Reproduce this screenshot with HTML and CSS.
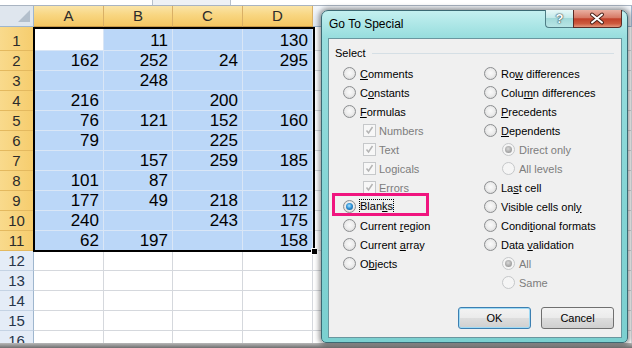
FILE: index.html
```html
<!DOCTYPE html>
<html lang="en">
<head>
  <meta charset="UTF-8">
  <title>Go To Special</title>
  <link rel="stylesheet" href="styles.css">
</head>
<body>
<div class="screen">
  <div class="formula-bar">
    <span class="fb-name"></span>
    <span class="fb-tools"></span>
    <span class="fb-input"></span>
  </div>

  <div class="sheet">
    <div class="corner">
      <svg width="14" height="14" viewBox="0 0 14 14"><polygon points="13,1 13,13 1,13" fill="#b3bfcc"/></svg>
    </div>
    <div class="ch on">A</div><div class="ch on">B</div><div class="ch on">C</div><div class="ch on">D</div><div class="ch">E</div>

    <div class="rh on">1</div><div class="c active"></div><div class="c sel">11</div><div class="c sel"></div><div class="c sel">130</div><div class="c"></div>
    <div class="rh on">2</div><div class="c sel">162</div><div class="c sel">252</div><div class="c sel">24</div><div class="c sel">295</div><div class="c"></div>
    <div class="rh on">3</div><div class="c sel"></div><div class="c sel">248</div><div class="c sel"></div><div class="c sel"></div><div class="c"></div>
    <div class="rh on">4</div><div class="c sel">216</div><div class="c sel"></div><div class="c sel">200</div><div class="c sel"></div><div class="c"></div>
    <div class="rh on">5</div><div class="c sel">76</div><div class="c sel">121</div><div class="c sel">152</div><div class="c sel">160</div><div class="c"></div>
    <div class="rh on">6</div><div class="c sel">79</div><div class="c sel"></div><div class="c sel">225</div><div class="c sel"></div><div class="c"></div>
    <div class="rh on">7</div><div class="c sel"></div><div class="c sel">157</div><div class="c sel">259</div><div class="c sel">185</div><div class="c"></div>
    <div class="rh on">8</div><div class="c sel">101</div><div class="c sel">87</div><div class="c sel"></div><div class="c sel"></div><div class="c"></div>
    <div class="rh on">9</div><div class="c sel">177</div><div class="c sel">49</div><div class="c sel">218</div><div class="c sel">112</div><div class="c"></div>
    <div class="rh on">10</div><div class="c sel">240</div><div class="c sel"></div><div class="c sel">243</div><div class="c sel">175</div><div class="c"></div>
    <div class="rh on">11</div><div class="c sel">62</div><div class="c sel">197</div><div class="c sel"></div><div class="c sel">158</div><div class="c"></div>
    <div class="rh">12</div><div class="c"></div><div class="c"></div><div class="c"></div><div class="c"></div><div class="c"></div>
    <div class="rh">13</div><div class="c"></div><div class="c"></div><div class="c"></div><div class="c"></div><div class="c"></div>
    <div class="rh">14</div><div class="c"></div><div class="c"></div><div class="c"></div><div class="c"></div><div class="c"></div>
    <div class="rh">15</div><div class="c"></div><div class="c"></div><div class="c"></div><div class="c"></div><div class="c"></div>
    <div class="rh">16</div><div class="c"></div><div class="c"></div><div class="c"></div><div class="c"></div><div class="c"></div>

    <div class="selection"><span class="fill-handle"></span></div>
  </div>

  <div class="frame-bottom"></div>

  <div class="dialog">
    <div class="titlebar">
      <span class="title">Go To Special</span>
      <div class="caption-buttons">
        <span class="help-btn">?</span>
        <span class="close-btn">
          <svg width="46" height="17" viewBox="0 0 46 17">
            <path d="M18 4.5 L28 12.5 M28 4.5 L18 12.5" stroke="#4a2118" stroke-width="4" stroke-linecap="round"/>
            <path d="M18 4.5 L28 12.5 M28 4.5 L18 12.5" stroke="#fff" stroke-width="2" stroke-linecap="round"/>
          </svg>
        </span>
      </div>
    </div>

    <div class="client">
      <div class="group-head">
        <span>Select</span>
        <span class="group-line"></span>
      </div>

      <div class="options">
        <div class="col">
          <div class="opt"><span class="radio"></span><span><u>C</u>omments</span></div>
          <div class="opt"><span class="radio"></span><span>C<u>o</u>nstants</span></div>
          <div class="opt"><span class="radio"></span><span><u>F</u>ormulas</span></div>
          <div class="opt sub disabled"><span class="check"><svg width="11" height="11" viewBox="0 0 11 11"><path d="M2.5 5.5 L4.5 8 L8.5 2" fill="none" stroke="#b4b4b4" stroke-width="1.5"/></svg></span><span>Numbers</span></div>
          <div class="opt sub disabled"><span class="check"><svg width="11" height="11" viewBox="0 0 11 11"><path d="M2.5 5.5 L4.5 8 L8.5 2" fill="none" stroke="#b4b4b4" stroke-width="1.5"/></svg></span><span>Text</span></div>
          <div class="opt sub disabled"><span class="check"><svg width="11" height="11" viewBox="0 0 11 11"><path d="M2.5 5.5 L4.5 8 L8.5 2" fill="none" stroke="#b4b4b4" stroke-width="1.5"/></svg></span><span>Logicals</span></div>
          <div class="opt sub disabled"><span class="check"><svg width="11" height="11" viewBox="0 0 11 11"><path d="M2.5 5.5 L4.5 8 L8.5 2" fill="none" stroke="#b4b4b4" stroke-width="1.5"/></svg></span><span>Errors</span></div>
          <div class="opt"><span class="radio checked"></span><span class="focus">Blan<u>k</u>s</span><span class="highlight"></span></div>
          <div class="opt"><span class="radio"></span><span>Current <u>r</u>egion</span></div>
          <div class="opt"><span class="radio"></span><span>Current <u>a</u>rray</span></div>
          <div class="opt"><span class="radio"></span><span>O<u>b</u>jects</span></div>
        </div>
        <div class="col">
          <div class="opt"><span class="radio"></span><span>Ro<u>w</u> differences</span></div>
          <div class="opt"><span class="radio"></span><span>Colu<u>m</u>n differences</span></div>
          <div class="opt"><span class="radio"></span><span><u>P</u>recedents</span></div>
          <div class="opt"><span class="radio"></span><span><u>D</u>ependents</span></div>
          <div class="opt sub-radio disabled"><span class="radio checked"></span><span>Direct only</span></div>
          <div class="opt sub-radio disabled"><span class="radio"></span><span>All levels</span></div>
          <div class="opt"><span class="radio"></span><span>La<u>s</u>t cell</span></div>
          <div class="opt"><span class="radio"></span><span>Visible cells onl<u>y</u></span></div>
          <div class="opt"><span class="radio"></span><span>Condi<u>t</u>ional formats</span></div>
          <div class="opt"><span class="radio"></span><span>Data <u>v</u>alidation</span></div>
          <div class="opt sub-radio disabled"><span class="radio checked"></span><span>All</span></div>
          <div class="opt sub-radio disabled"><span class="radio"></span><span>Same</span></div>
        </div>
      </div>

      <div class="actions">
        <button class="btn default">OK</button>
        <button class="btn">Cancel</button>
      </div>
    </div>
  </div>
</div>
</body>
</html>
```

FILE: styles.css
```css
body {
  margin: 0;
  overflow: hidden;
  font-family: "Liberation Sans", Arial, sans-serif;
}

.screen {
  position: relative;
  width: 632px;
  height: 348px;
  overflow: hidden;
  display: flex;
  flex-direction: column;
  background: #ffffff;
}

/* bottom edge of the formula bar */
.formula-bar {
  height: 5px;
  flex: none;
  display: flex;
  background: #eef1f5;
  border-bottom: 1px solid #a9b4c2;
}

.fb-name {
  width: 152px;
  border-right: 1px solid #b7c0cb;
  background: #ffffff;
}

.fb-tools {
  width: 77px;
  border-right: 1px solid #b7c0cb;
}

.fb-input {
  flex: 1;
  background: #ffffff;
}

/* worksheet */
.sheet {
  position: relative;
  flex: 1;
  overflow: hidden;
  display: grid;
  grid-template-columns: 34px 70px 69px 70px 70px 1fr;
  grid-template-rows: 21px 24px repeat(15, 20px);
}

.corner {
  box-sizing: border-box;
  background: #dfe6ee;
  border-right: 1px solid #9eb6ce;
  border-bottom: 1px solid #9eb6ce;
  display: flex;
  align-items: flex-end;
  justify-content: flex-end;
  padding: 0 2px 3px 0;
}

.corner svg {
  display: block;
}

.ch {
  box-sizing: border-box;
  background: linear-gradient(#f4f7fb, #dde6f1);
  border-right: 1px solid #9eb6ce;
  border-bottom: 1px solid #9eb6ce;
  color: #27354a;
  font-size: 15px;
  line-height: 20px;
  text-align: center;
}

.ch.on {
  background: linear-gradient(#fae4a8 0, #f8d681 45%, #f4c662 100%);
  border-right-color: #d9b066;
  border-bottom-color: #c99a48;
  color: #2b2b2b;
}

.rh {
  box-sizing: border-box;
  background: #e4ecf7;
  border-right: 1px solid #9eb6ce;
  border-bottom: 1px solid #c5d3e4;
  color: #27354a;
  font-size: 15px;
  line-height: 15px;
  display: flex;
  align-items: flex-end;
  justify-content: center;
  padding-bottom: 2px;
}

.rh.on {
  background: linear-gradient(90deg, #f9da8c, #f6cd6e);
  border-right-color: #c99a48;
  border-bottom-color: #e4b95f;
  color: #2b2b2b;
}

.c {
  box-sizing: border-box;
  border-right: 1px solid #d5d8dd;
  border-bottom: 1px solid #d5d8dd;
  font-size: 17px;
  line-height: 17px;
  display: flex;
  align-items: flex-end;
  justify-content: flex-end;
  padding: 0 4px 1px 0;
}

.c.sel {
  background: #bbd7f8;
  border-color: #d9e6f6;
}

.c.active {
  background: #ffffff;
  border-color: #d9e6f6;
}

.selection {
  position: absolute;
  left: 33px;
  top: 21px;
  width: 282px;
  height: 225px;
  box-sizing: border-box;
  border: 2px solid #000000;
}

.fill-handle {
  position: absolute;
  right: -5px;
  bottom: -5px;
  width: 5px;
  height: 5px;
  background: #000000;
  border: 1px solid #ffffff;
}

.frame-bottom {
  height: 5px;
  flex: none;
  background: linear-gradient(#b9b9b9, #6f6f6f);
}

/* dialog window */
.dialog {
  position: absolute;
  left: 321px;
  top: 10px;
  width: 307px;
  height: 333px;
  box-sizing: border-box;
  display: flex;
  flex-direction: column;
  padding: 0 5px 4px 6px;
  border: 1px solid #3b6973;
  border-radius: 7px 7px 5px 5px;
  background: linear-gradient(180deg, #c4f0f0 0, #98dede 26px, #82d4d4 60%, #7bd0d0 100%);
  box-shadow: 0 0 5px 2px rgba(0, 0, 0, 0.4);
  font-size: 11px;
}

.titlebar {
  height: 27px;
  flex: none;
  display: flex;
  align-items: flex-start;
}

.title {
  margin: 6px 0 0 1px;
  font-size: 12px;
  line-height: 14px;
  color: #000000;
}

.caption-buttons {
  margin: -1px 0 0 auto;
  display: flex;
}

.help-btn {
  width: 27px;
  height: 17px;
  border: 1px solid #4f7e86;
  border-top: none;
  border-right: none;
  border-radius: 0 0 0 4px;
  background: linear-gradient(#e8f8f8 0, #c4eaea 45%, #a2d9d9 50%, #b8e5e5 100%);
  color: #ffffff;
  font-weight: bold;
  font-size: 13px;
  line-height: 17px;
  text-align: center;
  text-shadow: 0 0 1px #33555b, 0 0 1px #33555b, 0 0 2px #33555b;
}

.close-btn {
  width: 47px;
  height: 17px;
  border: 1px solid #5c2c26;
  border-top: none;
  border-radius: 0 0 4px 0;
  background: linear-gradient(#eab0a2 0, #d77a66 45%, #c1412a 52%, #cd5a3e 80%, #e3967c 100%);
}

.close-btn svg {
  display: block;
}

.client {
  flex: 1;
  display: flex;
  flex-direction: column;
  padding: 6px 7px 8px 6px;
  border: 1px solid #6a979f;
  background: #f0f0f0;
  color: #000000;
}

.group-head {
  height: 16px;
  display: flex;
  align-items: center;
  gap: 6px;
  font-size: 11px;
}

.group-line {
  flex: 1;
  border-top: 1px solid #d5dfe5;
}

.options {
  display: grid;
  grid-template-columns: 141px 1fr;
  margin: 3px 0 0 8px;
}

.col {
  display: flex;
  flex-direction: column;
}

.opt {
  position: relative;
  height: 19px;
  display: flex;
  align-items: center;
  gap: 4px;
  white-space: nowrap;
}

.opt.sub {
  padding-left: 20px;
  gap: 3px;
}

.opt.sub-radio {
  padding-left: 18px;
}

.opt.disabled {
  color: #7d7d7d;
}

.radio {
  position: relative;
  flex: none;
  width: 13px;
  height: 13px;
  box-sizing: border-box;
  border-radius: 50%;
  border: 1px solid #8c8e90;
  background: radial-gradient(circle at 50% 45%, #fafafa 0, #ececec 50%, #cdcdcd 100%);
}

.radio.checked::after {
  content: "";
  position: absolute;
  left: 2px;
  top: 2px;
  width: 7px;
  height: 7px;
  border-radius: 50%;
  background: radial-gradient(circle at 45% 40%, #aee4ff 0, #2f93d8 45%, #0a4a82 100%);
}

.disabled .radio {
  border-color: #c5c7c9;
  background: #f5f5f5;
}

.disabled .radio.checked::after {
  background: radial-gradient(circle at 45% 40%, #d8d8d8 0, #a6a6a6 60%, #8f8f8f 100%);
}

.check {
  flex: none;
  width: 13px;
  height: 13px;
  box-sizing: border-box;
  border: 1px solid #c6c8ca;
  background: #f7f7f7;
}

.check svg {
  display: block;
}

.focus {
  outline: 1px dotted #000000;
  line-height: 13px;
}

.highlight {
  position: absolute;
  left: -11px;
  top: -4px;
  width: 97px;
  height: 23px;
  box-sizing: border-box;
  border: 3px solid #f0157f;
}

.actions {
  margin-top: auto;
  display: flex;
  justify-content: flex-end;
  gap: 10px;
}

.btn {
  width: 73px;
  height: 22px;
  padding: 0;
  border: 1px solid #707070;
  border-radius: 3px;
  background: linear-gradient(#f3f3f3 0, #ebebeb 48%, #dddddd 52%, #cfcfcf 100%);
  font-family: "Liberation Sans", Arial, sans-serif;
  font-size: 11px;
  color: #000000;
}

.btn.default {
  border-color: #3c7fb1;
  box-shadow: inset 0 0 0 1px #9fdaf5;
}
```
